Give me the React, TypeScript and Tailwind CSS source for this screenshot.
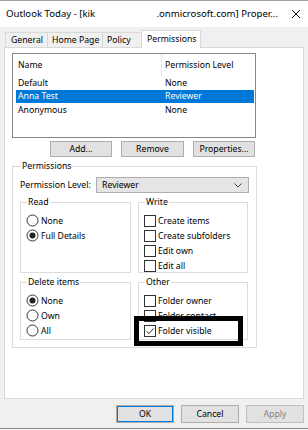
import React from 'react';

const FONT = { fontFamily: '"Segoe UI", "Noto Sans", "Open Sans", sans-serif' };

function Radio({ checked, label }: { checked?: boolean; label: string }) {
  return (
    <div className="flex h-[15px] items-center gap-[2px]">
      <svg width="13" height="13" viewBox="0 0 13 13">
        <circle cx="6.5" cy="6.5" r="5.5" fill="#fff" stroke="#333" strokeWidth="1" />
        {checked && <circle cx="6.5" cy="6.5" r="3" fill="#222" />}
      </svg>
      <span>{label}</span>
    </div>
  );
}

function Check({ checked, label }: { checked?: boolean; label: string }) {
  return (
    <div className="flex h-[15px] items-center gap-[2px]">
      <svg width="12" height="12" viewBox="0 0 12 12">
        <rect x="0.5" y="0.5" width="11" height="11" fill="#fff" stroke="#333" />
        {checked && <path d="M2.5 6.2 L5 8.6 L9.6 3.4" fill="none" stroke="#333" strokeWidth="1" />}
      </svg>
      <span>{label}</span>
    </div>
  );
}

function Group({ title, className, children }: { title: string; className?: string; children: React.ReactNode }) {
  return (
    <fieldset className={`border border-[#dcdcdc] px-[5px] ${className ?? ''}`}>
      <legend className="ml-[1px] px-[1px] leading-[14px]">{title}</legend>
      {children}
    </fieldset>
  );
}

function Btn({ children, className }: { children: React.ReactNode; className?: string }) {
  return (
    <div className={`flex h-[16px] items-center justify-center border border-[#adadad] bg-[#e1e1e1] ${className ?? ''}`}>
      {children}
    </div>
  );
}

export default function App() {
  const rows = [
    { name: 'Default', level: 'None' },
    { name: 'Anna Test', level: 'Reviewer', selected: true },
    { name: 'Anonymous', level: 'None' },
  ];

  return (
    <div
      className="flex h-[430px] w-[308px] flex-col overflow-hidden border-t border-[#a0a0a0] bg-[#f0f0f0] text-[8.7px] leading-[12px] text-black"
      style={FONT}
    >
      {/* Title bar */}
      <div className="flex h-[26px] items-center bg-white pl-[6px] pr-[7px] text-[9.6px]">
        <span>Outlook Today - [kik</span>
        <span className="ml-auto mr-[13px]">.onmicrosoft.com] Proper...</span>
        <svg width="10" height="10" viewBox="0 0 10 10">
          <path d="M1 1 L9 9 M9 1 L1 9" stroke="#111" strokeWidth="1" />
        </svg>
      </div>

      {/* Tabs */}
      <div className="flex h-[20px] items-end pl-[5px]">
        <div className="flex h-[15px] w-[42px] items-center border-l border-t border-[#d9d9d9] pl-[5px]">General</div>
        <div className="flex h-[15px] w-[55px] items-center border-l border-t border-[#d9d9d9] pl-[4px]">Home Page</div>
        <div className="flex h-[15px] w-[39px] items-center border-l border-t border-[#d9d9d9] pl-[4px]">Policy</div>
        <div className="relative z-10 -mb-px flex h-[18px] w-[60px] items-center border-x border-t border-[#d9d9d9] bg-white pb-[1px] pl-[5px]">
          Permissions
        </div>
      </div>

      {/* Panel */}
      <div className="mx-[4px] flex h-[352px] flex-col border border-[#d9d9d9] bg-white pl-[7px] pt-[5px]">
        {/* List */}
        <div className="flex h-[85px] w-[244px] flex-col border border-[#828790] pl-[3px] pr-[1px]">
          <div className="flex h-[22px] shrink-0 items-center">
            <span className="w-[145px] pl-[2px]">Name</span>
            <span className="h-full border-l border-[#e5e5e5]" />
            <span className="pl-[3px]">Permission Level</span>
          </div>
          {rows.map((r) => (
            <div
              key={r.name}
              className={`flex h-[13.5px] shrink-0 items-center ${r.selected ? 'bg-[#0078d7] text-white' : ''}`}
            >
              <span className="w-[146px] pl-[2px]">{r.name}</span>
              <span className="pl-[3px]">{r.level}</span>
            </div>
          ))}
        </div>

        {/* List buttons */}
        <div className="mt-[3px] flex w-[243px] justify-end gap-[9px]">
          <Btn className="w-[62px]">Add...</Btn>
          <Btn className="w-[63px]">Remove</Btn>
          <Btn className="w-[62px]">Properties...</Btn>
        </div>

        {/* Permissions group */}
        <fieldset className="mt-[1px] h-[190px] w-[244px] border border-[#dcdcdc] px-[7px]">
          <legend className="ml-[1px] px-[1px] leading-[16px]">Permissions</legend>
          <div className="mt-[3px] flex h-[16px] items-center">
            <span className="w-[76px]">Permission Level:</span>
            <div className="flex h-[16px] w-[153px] items-center border border-[#adadad] bg-[#e5e5e5] pl-[5px] pr-[6px]">
              <span>Reviewer</span>
              <svg className="ml-auto" width="8" height="5" viewBox="0 0 8 5">
                <path d="M0.5 0.5 L4 4 L7.5 0.5" fill="none" stroke="#444" strokeWidth="1" />
              </svg>
            </div>
          </div>

          <div className="mt-[2px] grid grid-cols-[111px_110px] gap-x-[7px] gap-y-[2px]">
            <Group title="Read" className="h-[78px] pt-[4px]">
              <Radio label="None" />
              <Radio label="Full Details" checked />
            </Group>
            <Group title="Write" className="h-[78px] pt-[4px]">
              <Check label="Create items" />
              <Check label="Create subfolders" />
              <Check label="Edit own" />
              <Check label="Edit all" />
            </Group>
            <Group title="Delete items" className="h-[65px] pt-[4px]">
              <Radio label="None" checked />
              <Radio label="Own" />
              <Radio label="All" />
            </Group>
            <Group title="Other" className="relative h-[65px] pt-[4px]">
              <Check label="Folder owner" />
              <Check label="Folder contact" />
              <Check label="Folder visible" checked />
              {/* highlight annotation */}
              <div className="absolute left-[-5px] top-[27px] h-[30px] w-[109px] border-[5px] border-black" />
            </Group>
          </div>
        </fieldset>
      </div>

      {/* Dialog buttons */}
      <div className="mt-[6px] flex justify-end gap-[7px] pr-[4px]">
        <Btn className="h-[18px] w-[58px] border-[#0078d7] outline outline-1 outline-[#0078d7] -outline-offset-2">OK</Btn>
        <Btn className="h-[18px] w-[58px]">Cancel</Btn>
        <Btn className="h-[18px] w-[58px] border-[#bfbfbf] bg-[#cccccc] text-[#838383]">Apply</Btn>
      </div>
      <div className="mt-auto h-[2px] border-t border-[#8a8a8a] bg-[#f8f8f8]" />
    </div>
  );
}
